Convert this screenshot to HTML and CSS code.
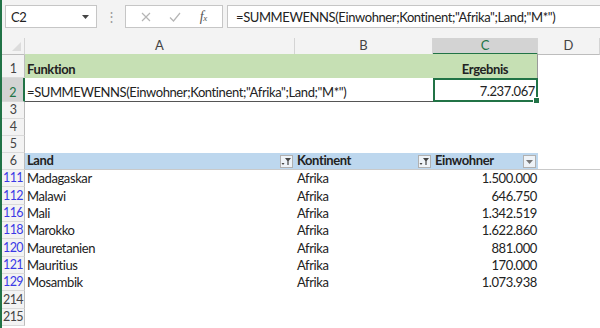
FILE: index.html
```html
<!DOCTYPE html>
<html lang="de">
<head>
  <meta charset="UTF-8" />
  <title>SUMMEWENNS</title>
  <link rel="stylesheet" href="styles.css">
</head>
<body>
  <div class="fenster">
    <div class="bearbeitungsleiste">
      <div class="namenfeld">
        <span>C2</span>
        <svg class="pfeil" width="7" height="4" viewBox="0 0 7 4"><path d="M0 0h7L3.5 4z" fill="#444"/></svg>
      </div>
      <div class="griff">⋮</div>
      <div class="knoepfe">
        <svg width="10" height="10" viewBox="0 0 10 10"><path d="M1 1l8 8M9 1l-8 8" stroke="#b5b5b5" stroke-width="1.2"/></svg>
        <svg width="12" height="10" viewBox="0 0 12 10"><path d="M1 5.5l3.5 3.5L11 1" stroke="#b5b5b5" stroke-width="1.2" fill="none"/></svg>
        <span class="fx">f<small>x</small></span>
      </div>
      <div class="eingabe">=SUMMEWENNS(Einwohner;Kontinent;"Afrika";Land;"M*")</div>
    </div>

    <div class="blatt">
      <div class="zeile kopf">
        <div class="ecke"></div>
        <div class="sp">A</div>
        <div class="sp">B</div>
        <div class="sp aktiv">C</div>
        <div class="sp">D</div>
      </div>

      <div class="zeile hoch">
        <div class="nr">1</div>
        <div class="zelle gruen fett">Funktion</div>
        <div class="zelle gruen"></div>
        <div class="zelle gruen fett mitte rand-r">Ergebnis</div>
        <div class="zelle"></div>
      </div>

      <div class="zeile hoch">
        <div class="nr aktiv">2</div>
        <div class="zelle unten">=SUMMEWENNS(Einwohner;Kontinent;"Afrika";Land;"M*")</div>
        <div class="zelle unten"></div>
        <div class="zelle unten rechts auswahl">7.237.067<i class="ziehpunkt"></i></div>
        <div class="zelle"></div>
      </div>

      <div class="zeile"><div class="nr">3</div><div class="zelle"></div><div class="zelle"></div><div class="zelle"></div><div class="zelle"></div></div>
      <div class="zeile"><div class="nr">4</div><div class="zelle"></div><div class="zelle"></div><div class="zelle"></div><div class="zelle"></div></div>
      <div class="zeile"><div class="nr">5</div><div class="zelle"></div><div class="zelle"></div><div class="zelle"></div><div class="zelle"></div></div>

      <div class="zeile tabkopf">
        <div class="nr">6</div>
        <div class="zelle blau fett">Land
          <span class="filter"><svg width="11" height="9" viewBox="0 0 11 9"><path d="M4 1h6L7.6 4v4H6.4V4z" fill="#444"/><path d="M0.5 6h3L2 8z" fill="#444"/></svg></span>
        </div>
        <div class="zelle blau fett">Kontinent
          <span class="filter"><svg width="11" height="9" viewBox="0 0 11 9"><path d="M4 1h6L7.6 4v4H6.4V4z" fill="#444"/><path d="M0.5 6h3L2 8z" fill="#444"/></svg></span>
        </div>
        <div class="zelle blau fett">Einwohner
          <span class="filter"><svg width="7" height="4" viewBox="0 0 7 4"><path d="M0 0h7L3.5 4z" fill="#777"/></svg></span>
        </div>
        <div class="zelle"></div>
      </div>

      <div id="daten"></div>

      <div class="zeile daten"><div class="nr">214</div><div class="zelle"></div><div class="zelle"></div><div class="zelle"></div><div class="zelle"></div></div>
      <div class="zeile daten"><div class="nr">215</div><div class="zelle"></div><div class="zelle"></div><div class="zelle"></div><div class="zelle"></div></div>
    </div>
  </div>

  <script>
    const laender = [
      [111, 'Madagaskar', '1.500.000'],
      [112, 'Malawi', '646.750'],
      [116, 'Mali', '1.342.519'],
      [118, 'Marokko', '1.622.860'],
      [120, 'Mauretanien', '881.000'],
      [121, 'Mauritius', '170.000'],
      [129, 'Mosambik', '1.073.938']
    ];

    let html = "";
    for (const [nr, land, einwohner] of laender) {
      html += `<div class="zeile daten">
        <div class="nr gefiltert">${nr}</div>
        <div class="zelle">${land}</div>
        <div class="zelle">Afrika</div>
        <div class="zelle rechts">${einwohner}</div>
        <div class="zelle"></div>
      </div>`;
    }
    document.getElementById("daten").outerHTML = html;
  </script>
</body>
</html>
```

FILE: styles.css
```css
body {
  margin: 0;
  width: 600px;
  height: 328px;
  overflow: hidden;
  font-family: Lato, "Noto Sans", sans-serif;
  font-size: 13px;
  letter-spacing: -0.4px;
  color: #222;
  background: #fff;
}

.fenster {
  border-left: 2px solid #217346;
  height: 328px;
  box-sizing: border-box;
}

/* Bearbeitungsleiste */
.bearbeitungsleiste {
  display: flex;
  align-items: flex-start;
  height: 38px;
  padding: 5px 0 0 3px;
  box-sizing: border-box;
  background: #f3f3f3;
}

.namenfeld {
  width: 92px;
  height: 23px;
  box-sizing: border-box;
  border: 1px solid #c6c6c6;
  background: #fff;
  display: flex;
  align-items: center;
  justify-content: space-between;
  padding: 0 7px 0 5px;
}

.griff {
  width: 28px;
  text-align: center;
  color: #999;
  font-size: 13px;
  line-height: 23px;
}

.knoepfe {
  width: 98px;
  height: 23px;
  box-sizing: border-box;
  border: 1px solid #c6c6c6;
  background: #fff;
  display: flex;
  align-items: center;
  justify-content: space-around;
  padding: 0 6px;
}

.fx {
  font-family: "Liberation Serif", serif;
  font-style: italic;
  font-size: 14px;
  color: #555;
}

.fx small {
  font-size: 9px;
}

.eingabe {
  flex: 1;
  height: 23px;
  box-sizing: border-box;
  margin-left: 4px;
  border: 1px solid #c6c6c6;
  border-right: none;
  background: #fff;
  padding: 1px 0 0 8px;
  line-height: 20px;
  white-space: nowrap;
}

/* Tabellenblatt */
.zeile {
  display: grid;
  grid-template-columns: 23px 270px 138px 105px 1fr;
  height: 17px;
}

.zeile.kopf {
  height: 16px;
}

.zeile.hoch {
  height: 24px;
}

.zeile.daten {
  height: 17.33px;
}

.ecke {
  background: #f3f3f3;
  border-right: 1px solid #d4d4d4;
  border-bottom: 1px solid #bdbdbd;
  position: relative;
}

.ecke::after {
  content: "";
  position: absolute;
  right: 3px;
  bottom: 3px;
  border-left: 9px solid transparent;
  border-bottom: 9px solid #dcdcdc;
}

.sp {
  background: #f3f3f3;
  border-right: 1px solid #d4d4d4;
  border-bottom: 1px solid #bdbdbd;
  text-align: center;
  font-size: 13px;
  letter-spacing: 0;
  line-height: 15px;
  color: #444;
}

.sp.aktiv {
  background: #d3d3d3;
  color: #217346;
  border-bottom: 2px solid #217346;
}

.nr {
  background: #f3f3f3;
  border-right: 1px solid #bdbdbd;
  border-bottom: 1px solid #dadada;
  text-align: center;
  font-size: 12.5px;
  letter-spacing: -0.6px;
  color: #444;
  display: flex;
  align-items: flex-end;
  justify-content: center;
  line-height: 15px;
  padding-bottom: 1px;
  box-sizing: border-box;
}

.nr.aktiv {
  background: #d3d3d3;
  color: #217346;
  border-right: 2px solid #217346;
}

.nr.gefiltert {
  color: #3a3ae6;
}

.zelle {
  display: flex;
  align-items: flex-end;
  padding: 0 2px 1px 2px;
  white-space: nowrap;
  line-height: 15px;
  position: relative;
  box-sizing: border-box;
}

.fett {
  font-weight: bold;
}

.mitte {
  justify-content: center;
}

.rechts {
  justify-content: flex-end;
  padding-right: 1px;
}

.gruen {
  background: #c6e0b4;
}

.rand-r {
  border-right: 1px solid #9a9a9a;
}

.unten {
  border-bottom: 1px solid #555;
}

.auswahl {
  border: 2px solid #217346;
  padding-right: 1px;
}

.ziehpunkt {
  position: absolute;
  right: -4px;
  bottom: -4px;
  width: 5px;
  height: 5px;
  background: #217346;
  border: 1px solid #fff;
}

.tabkopf .zelle {
  border-bottom: 1px solid #c9c9c9;
}

.blau {
  background: #bdd7ee;
}

.filter {
  position: absolute;
  right: 2px;
  top: 2px;
  width: 13px;
  height: 13px;
  box-sizing: border-box;
  border: 1px solid #b0b0b0;
  background: #eef3f8;
  display: flex;
  align-items: center;
  justify-content: center;
}
```
